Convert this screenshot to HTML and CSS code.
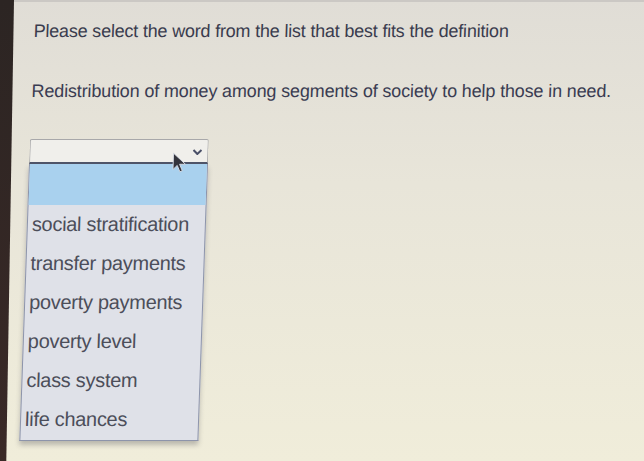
FILE: index.html
```html
<!DOCTYPE html>
<html lang="en">
<head>
    <meta charset="UTF-8">
    <title>Vocabulary Question</title>
    <link rel="stylesheet" href="styles.css">
</head>
<body>
    <div class="screen">
        <div class="bezel"></div>
        <div class="page">
            <div class="content">
                <p class="prompt">Please select the word from the list that best fits the definition</p>
                <p class="definition">Redistribution of money among segments of society to help those in need.</p>

                <div class="dropdown">
                    <div class="select-box">
                        <svg class="chevron" viewBox="0 0 10 6" width="10" height="6">
                            <path d="M1 1l4 4 4-4" fill="none" stroke="#4a5068" stroke-width="2" />
                        </svg>
                        <svg class="cursor" viewBox="0 0 12 18" width="14" height="21">
                            <path d="M1 1v14l3.5-3.5 2.5 5.5 2-1-2.5-5.5h5z" fill="#34343c" stroke="#d8dce4" stroke-width="0.8" />
                        </svg>
                    </div>
                    <ul class="options">
                        <li class="selected"></li>
                        <li>social stratification</li>
                        <li>transfer payments</li>
                        <li>poverty payments</li>
                        <li>poverty level</li>
                        <li>class system</li>
                        <li>life chances</li>
                    </ul>
                </div>
            </div>
        </div>
    </div>
</body>
</html>
```

FILE: styles.css
```css
body {
    margin: 0;
    font-family: "Liberation Sans", Arial, sans-serif;
    background-color: #e6e3d8;
    overflow: hidden;
}

.screen {
    display: flex;
    height: 461px;
    overflow: hidden;
    background: linear-gradient(to bottom, #e0ddd6 0%, #e8e5d9 40%, #f0edda 100%);
}

.bezel {
    width: 14px;
    flex-shrink: 0;
    background: linear-gradient(to bottom, #2c2523, #3a2926);
    clip-path: polygon(0 0, 100% 0, 45% 100%, 0 100%);
}

.page {
    flex: 1;
    padding: 19px 0 0 20px;
    border-top: 2px solid #cbc8c4;
}

.content {
    transform: skewX(-2deg);
    transform-origin: 0 0;
}

.prompt {
    margin: 0;
    font-size: 18px;
    color: #3a3c4e;
    letter-spacing: -0.2px;
}

.definition {
    margin: 39px 0 0 0;
    font-size: 18px;
    color: #3a3c52;
    letter-spacing: -0.15px;
}

.dropdown {
    margin: 37px 0 0 0;
    width: 179px;
}

.select-box {
    position: relative;
    height: 22px;
    background-color: #f0efeb;
    border: 1px solid #a8a8aa;
    border-bottom: 2px solid #4e5468;
    border-radius: 2px 2px 0 0;
}

.chevron {
    position: absolute;
    right: 5px;
    top: 9px;
}

.cursor {
    position: absolute;
    left: 142px;
    top: 12px;
    z-index: 2;
}

.options {
    list-style: none;
    margin: 0;
    padding: 0 0 1px 0;
    background-color: #dfe1e8;
    border: 1px solid #8d94aa;
    border-top: none;
    box-shadow: 0 4px 5px rgba(60, 60, 70, 0.3);
}

.options li {
    height: 39px;
    line-height: 39px;
    padding-left: 4px;
    font-size: 20px;
    color: #4c4e5a;
    letter-spacing: -0.3px;
}

.options li.selected {
    height: 41px;
    background-color: #a9d1ee;
}
```
